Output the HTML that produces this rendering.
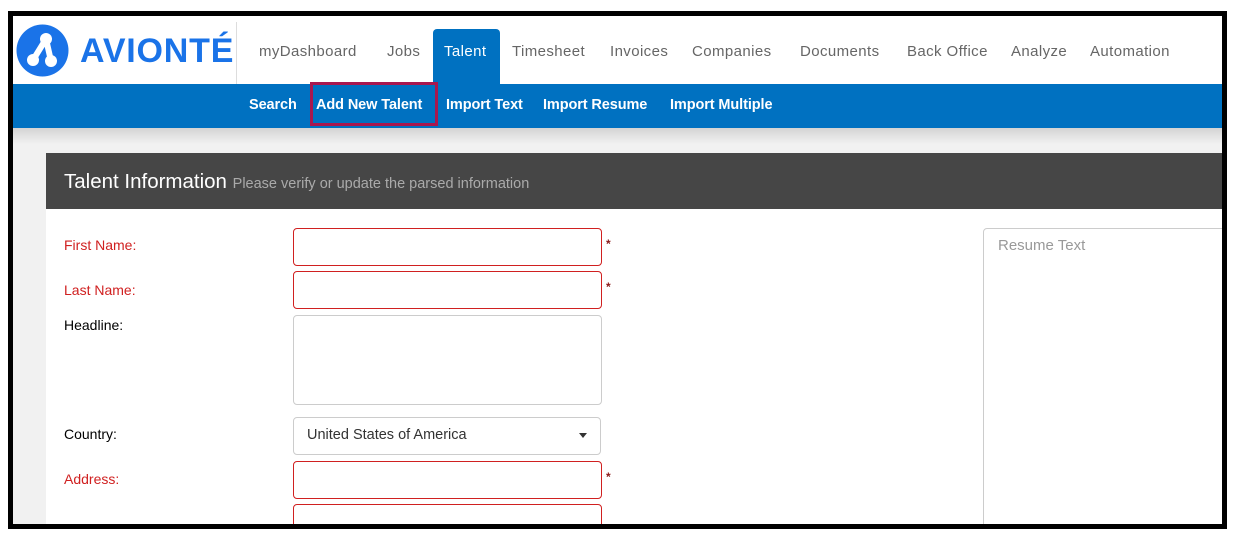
<!DOCTYPE html>
<html><head><meta charset="utf-8"><style>
*{margin:0;padding:0;box-sizing:border-box}
body{width:1235px;height:541px;background:#fff;position:relative;overflow:hidden;font-family:"Liberation Sans",sans-serif}
.frame{position:absolute;left:8px;top:11px;width:1219px;height:518px;border:5px solid #000;background:#f1f1f1;overflow:hidden}
.a{position:absolute}
.nav{left:0;top:0;width:1210px;height:68px;background:#fff}
.nav span{position:absolute;top:27px;font-size:15px;color:#666;letter-spacing:0.4px}
.sub{left:0;top:68px;width:1210px;height:44px;background:#0071c1}
.sub span{position:absolute;top:13px;font-size:14.5px;color:#fff;font-weight:bold;letter-spacing:-0.1px}
.shade{left:0;top:112px;width:1210px;height:16px;background:linear-gradient(#d4d4d4,#f1f1f1)}
.panel{left:33px;top:137px;width:1180px;height:400px;background:#fff}
.ph{left:0;top:0;width:1180px;height:56px;background:#464646}
.lbl{position:absolute;font-size:14px;left:18px}
.red{color:#d02020}
.inp{position:absolute;left:247px;width:309px;height:38px;border:1px solid #d02020;border-radius:4px;background:#fff}
.star{position:absolute;left:560px;font-size:12px;color:#8b1a1a;font-weight:bold}
</style></head><body>
<div class="frame">
 <div class="a nav">
  <svg class="a" style="left:3px;top:8px" width="53" height="53" viewBox="0 0 53 53"><circle cx="26.5" cy="26.5" r="26" fill="#1a73e8"/><circle cx="30" cy="15" r="6" fill="#fff"/><circle cx="17" cy="36" r="6" fill="#fff"/><circle cx="35" cy="37" r="6" fill="#fff"/><path d="M30 15 L17 36 M30 15 L35 37" stroke="#fff" stroke-width="6"/></svg>
  <div class="a" style="left:67px;top:16px;font-size:34px;font-weight:bold;color:#1a73e8;letter-spacing:0.8px">AVIONTÉ</div>
  <div class="a" style="left:223px;top:6px;width:1px;height:62px;background:#ddd"></div>
  <div class="a" style="left:420px;top:13px;width:67px;height:55px;background:#0071c1;border-radius:4px 4px 0 0"></div>
  <span style="left:246px">myDashboard</span><span style="left:374px">Jobs</span><span style="left:431px;color:#fff">Talent</span><span style="left:499px">Timesheet</span><span style="left:597px">Invoices</span><span style="left:679px">Companies</span><span style="left:787px">Documents</span><span style="left:894px">Back Office</span><span style="left:998px">Analyze</span><span style="left:1077px">Automation</span>
 </div>
 <div class="a sub">
  <span style="left:236px">Search</span><span style="left:303px">Add New Talent</span><span style="left:433px">Import Text</span><span style="left:530px">Import Resume</span><span style="left:657px">Import Multiple</span>
  <div class="a" style="left:297px;top:-2px;width:128px;height:44px;border:3px solid #a8174f"></div>
 </div>
 <div class="a shade"></div>
 <div class="a panel">
  <div class="a ph"><div class="a" style="left:18px;top:17px;font-size:20.5px;color:#fff">Talent Information <span style="font-size:14.5px;color:#aaa">Please verify or update the parsed information</span></div></div>
  <div class="lbl red" style="top:84px">First Name:</div>
  <div class="inp" style="top:75px"></div><div class="star" style="top:84px">*</div>
  <div class="lbl red" style="top:129px">Last Name:</div>
  <div class="inp" style="top:118px"></div><div class="star" style="top:127px">*</div>
  <div class="lbl" style="top:164px">Headline:</div>
  <div class="inp" style="top:162px;height:90px;border-color:#ccc"></div>
  <div class="lbl" style="top:273px">Country:</div>
  <div class="inp" style="top:264px;border-color:#ccc;width:308px"><span style="position:absolute;left:13px;top:9px;font-size:14.5px;color:#333">United States of America</span><span style="position:absolute;right:13px;top:15px;border:4px solid transparent;border-top:5px solid #333"></span></div>
  <div class="lbl red" style="top:318px">Address:</div>
  <div class="inp" style="top:308px"></div><div class="star" style="top:317px">*</div>
  <div class="inp" style="top:351px"></div>
  <div class="a" style="left:937px;top:75px;width:260px;height:300px;border:1px solid #ccc;border-radius:4px"><span style="position:absolute;left:14px;top:8px;font-size:15px;color:#999">Resume Text</span></div>
 </div>
</div>
</body></html>
